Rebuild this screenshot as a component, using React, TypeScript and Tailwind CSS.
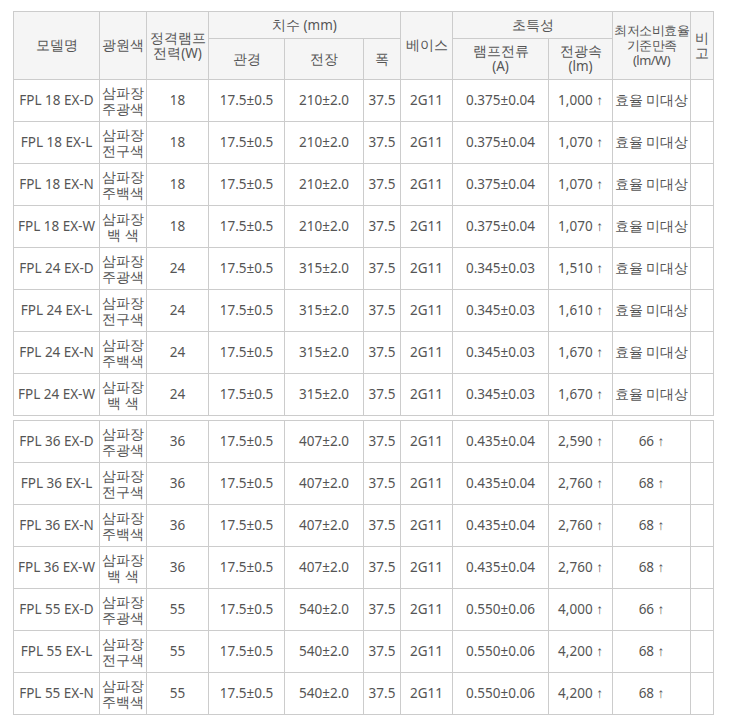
const widths = [86, 47, 62, 76, 79, 37, 52, 96, 64, 78, 23];

const colorMap: Record<string, string> = { D: '주광색', L: '전구색', N: '주백색', W: '백 색' };

type Row = [string, string, string, string, string, string, string];

const top: Row[] = [];
const bottom: Row[] = [];
const lum1: Record<string, string[]> = { '18': ['1,000', '1,070', '1,070', '1,070'], '24': ['1,510', '1,610', '1,670', '1,670'] };
['18', '24'].forEach((w) =>
  ['D', 'L', 'N', 'W'].forEach((c, i) =>
    top.push([`FPL ${w} EX-${c}`, c, w, w === '18' ? '210±2.0' : '315±2.0', w === '18' ? '0.375±0.04' : '0.345±0.03', lum1[w][i] + ' ↑', '효율 미대상'])
  )
);
const b36 = ['2,590', '2,760', '2,760', '2,760'];
const e36 = ['66', '68', '68', '68'];
['D', 'L', 'N', 'W'].forEach((c, i) => bottom.push([`FPL 36 EX-${c}`, c, '36', '407±2.0', '0.435±0.04', b36[i] + ' ↑', e36[i] + ' ↑']));
['D', 'L', 'N'].forEach((c, i) => bottom.push([`FPL 55 EX-${c}`, c, '55', '540±2.0', '0.550±0.06', ['4,000', '4,200', '4,200'][i] + ' ↑', ['66', '68', '68'][i] + ' ↑']));

const cell = 'border border-[#cccccc] text-center align-middle p-0 whitespace-nowrap';

function Cols() {
  return (
    <colgroup>
      {widths.map((w, i) => (
        <col key={i} style={{ width: w }} />
      ))}
    </colgroup>
  );
}

function Body({ rows }: { rows: Row[] }) {
  return (
    <tbody>
      {rows.map((r) => (
        <tr key={r[0]} className="h-[42px]">
          <td className={cell}>{r[0]}</td>
          <td className={`${cell} leading-[16px] text-[14px]`}>
            삼파장
            <br />
            {colorMap[r[1]]}
          </td>
          <td className={cell}>{r[2]}</td>
          <td className={cell}>17.5±0.5</td>
          <td className={cell}>{r[3]}</td>
          <td className={cell}>37.5</td>
          <td className={cell}>2G11</td>
          <td className={cell}>{r[4]}</td>
          <td className={cell}>{r[5]}</td>
          <td className={cell}>{r[6]}</td>
          <td className={cell}></td>
        </tr>
      ))}
    </tbody>
  );
}

export default function App() {
  const th = `${cell} bg-[#f5f5f5] font-normal leading-[15px]`;
  return (
    <div className="bg-white w-[741px] h-[721px] pt-[11px] pl-[13px] text-[13.5px] text-[#555555] font-['Noto_Sans','Noto_Sans_CJK_KR',sans-serif]">
      <table className="table-fixed border-collapse w-[700px]">
        <Cols />
        <thead>
          <tr className="h-[27px]">
            <th rowSpan={2} className={th}>모델명</th>
            <th rowSpan={2} className={th}>광원색</th>
            <th rowSpan={2} className={th}>정격램프<br />전력(W)</th>
            <th colSpan={3} className={th}>치수 (mm)</th>
            <th rowSpan={2} className={th}>베이스</th>
            <th colSpan={2} className={th}>초특성</th>
            <th rowSpan={2} className={`${th} tracking-[-0.5px] text-[13px]`}>최저소비효율<br />기준만족<br />(lm/W)</th>
            <th rowSpan={2} className={th}>비<br />고</th>
          </tr>
          <tr className="h-[41px]">
            <th className={th}>관경</th>
            <th className={th}>전장</th>
            <th className={th}>폭</th>
            <th className={th}>램프전류<br />(A)</th>
            <th className={th}>전광속<br />(lm)</th>
          </tr>
        </thead>
        <Body rows={top} />
      </table>
      <table className="table-fixed border-collapse w-[700px] mt-[4px]">
        <Cols />
        <Body rows={bottom} />
      </table>
    </div>
  );
}
